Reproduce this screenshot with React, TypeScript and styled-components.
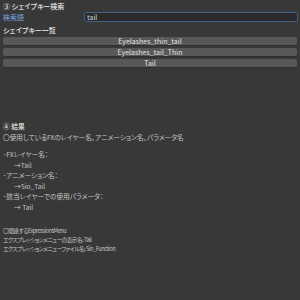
import React from 'react';
import styled, { createGlobalStyle } from 'styled-components';

const GlobalStyle = createGlobalStyle`
  html, body {
    margin: 0;
    padding: 0;
    background: #383838;
  }
  body {
    font-family: "Noto Sans CJK JP", "Noto Sans", sans-serif;
    font-feature-settings: "palt";
  }
`;

const shapeKeys = ['Eyelashes_thin_tail', 'Eyelashes_tail_Thin', 'Tail'];

function App() {
  return (
    <Page>
      <GlobalStyle />
      <Line bold>③ シェイプキー検索</Line>
      <SearchRow>
        <Label>検索語</Label>
        <Input defaultValue="tail" />
      </SearchRow>
      <Line bold>シェイプキー一覧</Line>
      <ButtonList>
        {shapeKeys.map((key) => (
          <KeyButton key={key}>{key}</KeyButton>
        ))}
      </ButtonList>

      <Section lh={11} top={53} size={6.7}>
        <Line bold>④ 結果</Line>
        <Line>〇使用しているFXのレイヤー名、アニメーション名、パラメータ名</Line>
      </Section>
      <Section lh={10.5} top={6} size={6.7}>
        <Line>･FXレイヤー名：</Line>
        <Line indent>→Tail</Line>
        <Line>･アニメーション名：</Line>
        <Line indent>→Sio_Tail</Line>
        <Line>･該当レイヤーでの使用パラメータ：</Line>
        <Line indent>→ Tail</Line>
      </Section>
      <Section lh={9} top={14} size={5.7} tight>
        <Line>〇関連するExpressionsMenu</Line>
        <Line>エクスプレッションメニューの表示名: Tail</Line>
        <Line>エクスプレッションメニューファイル名: Sio_Function</Line>
      </Section>
    </Page>
  );
}

const Page = styled.div`
  width: 300px;
  height: 300px;
  box-sizing: border-box;
  padding: 1px 3px 0;
  background: #383838;
  color: #c4c4c4;
  font-size: 7px;
  line-height: 10px;
  overflow: hidden;
`;

const Section = styled.div<{ lh: number; top: number; size: number; tight?: boolean }>`
  margin-top: ${(p) => p.top}px;
  line-height: ${(p) => p.lh}px;
  font-size: ${(p) => p.size}px;
  letter-spacing: ${(p) => (p.tight ? '-0.5px' : 'normal')};
`;

const Line = styled.div<{ bold?: boolean; indent?: boolean }>`
  min-height: 1em;
  white-space: nowrap;
  font-weight: ${(p) => (p.bold ? 700 : 400)};
  color: ${(p) => (p.bold ? '#d0d0d0' : 'inherit')};
  padding-left: ${(p) => (p.indent ? '11px' : '0')};
`;

const SearchRow = styled.div`
  display: flex;
  align-items: center;
  height: 10px;
  margin: 1px 0 3px;
`;

const Label = styled.span`
  width: 81px;
  color: #7ba7e0;
`;

const Input = styled.input`
  flex: 1;
  height: 10px;
  box-sizing: border-box;
  margin: 0 -1px 0 0;
  padding: 0 2px;
  background: #2a2a2a;
  border: 1px solid #3c6289;
  border-radius: 2px;
  color: #d2d2d2;
  font-family: inherit;
  font-size: 7px;
  outline: none;
`;

const ButtonList = styled.div`
  display: flex;
  flex-direction: column;
  gap: 2px;
  margin-top: 2px;
`;

const KeyButton = styled.button`
  height: 9px;
  padding: 0;
  background: #585858;
  border: none;
  border-bottom: 1px solid #303030;
  border-radius: 2px;
  color: #e2e2e2;
  font-family: inherit;
  font-size: 7px;
  line-height: 8px;
`;

export default App;
